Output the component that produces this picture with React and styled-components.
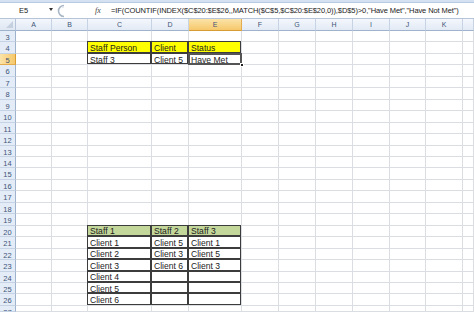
import React from 'react'
import styled, { createGlobalStyle, css } from 'styled-components'

const GlobalStyle = createGlobalStyle`
  html, body {
    margin: 0;
    padding: 0;
    background: #fff;
    overflow: hidden;
  }
  body {
    font-family: "Liberation Sans", Arial, sans-serif;
  }
`

const COLS = [
    { id: 'A', w: 36 }, { id: 'B', w: 36 }, { id: 'C', w: 64 }, { id: 'D', w: 37 },
    { id: 'E', w: 53 }, { id: 'F', w: 37 }, { id: 'G', w: 37 }, { id: 'H', w: 37 },
    { id: 'I', w: 37 }, { id: 'J', w: 36 }, { id: 'K', w: 37 }, { id: 'L', w: 11 },
]
const ROWS = Array.from({ length: 25 }, (_, i) => i + 3)
const ACTIVE = { col: 'E', row: 5 }
const YELLOW = '#ffff00'
const GREEN = '#c4d79b'

const CELLS = {
    C4: { v: 'Staff Person', fill: YELLOW, box: true },
    D4: { v: 'Client', fill: YELLOW, box: true },
    E4: { v: 'Status', fill: YELLOW, box: true },
    C5: { v: 'Staff 3', box: true },
    D5: { v: 'Client 5', box: true },
    E5: { v: 'Have Met', box: true },
    C20: { v: 'Staff 1', fill: GREEN, box: true },
    D20: { v: 'Staff 2', fill: GREEN, box: true },
    E20: { v: 'Staff 3', fill: GREEN, box: true },
}
const table2 = [
    ['Client 1', 'Client 5', 'Client 1'],
    ['Client 2', 'Client 3', 'Client 5'],
    ['Client 3', 'Client 6', 'Client 3'],
    ['Client 4', '', ''],
    ['Client 5', '', ''],
    ['Client 6', '', ''],
]
table2.forEach((r, i) => {
    ['C', 'D', 'E'].forEach((c, j) => {
        CELLS[c + (21 + i)] = { v: r[j], box: true }
    })
})

const FORMULA = '=IF(COUNTIF(INDEX($C$20:$E$26,,MATCH($C$5,$C$20:$E$20,0)),$D$5)>0,"Have Met","Have Not Met")'

const TopStrip = styled.div`
  height: 3px;
  background: #d3e1f1;
  border-bottom: 1px solid #b9cbe2;
  box-sizing: border-box;
`

const FormulaBar = styled.div`
  height: 16px;
  display: flex;
  align-items: center;
  background: #fff;
  border-bottom: 1px solid #b5c4d8;
  box-sizing: border-box;
  font-size: 7.5px;
  color: #222;
`

const NameBox = styled.div`
  width: 57px;
  height: 100%;
  display: flex;
  align-items: center;
  padding-left: 19px;
  box-sizing: border-box;
  position: relative;
`

const Caret = styled.span`
  position: absolute;
  right: 4px;
  top: 5px;
  width: 0;
  height: 0;
  border-left: 2px solid transparent;
  border-right: 2px solid transparent;
  border-top: 3px solid #333;
`

const Knob = styled.div`
  width: 38px;
  height: 100%;
  display: flex;
  align-items: center;
`

const FxLabel = styled.div`
  width: 13px;
  font-family: "Liberation Serif", serif;
  font-style: italic;
  font-size: 8px;
  color: #444;
`

const Formula = styled.div`
  flex: 1;
  height: 100%;
  display: flex;
  align-items: center;
  padding-left: 3px;
  white-space: nowrap;
  overflow: hidden;
  letter-spacing: -0.1px;
`

const Sheet = styled.div`
  display: grid;
  grid-template-columns: 16px ${COLS.map(c => c.w + 'px').join(' ')};
  grid-template-rows: 12px repeat(24, 11.46px) 6px;
  overflow: hidden;
`

const headerBg = css`
  background: ${p => p.$active
        ? 'linear-gradient(#fbe3a8, #f6c86c)'
        : 'linear-gradient(#f4f7fc, #e2eaf5)'};
`

const Corner = styled.div`
  background: linear-gradient(#eef3fa, #dfe7f2);
  border-right: 1px solid #b5c4d8;
  border-bottom: 1px solid #9fb3cc;
  box-sizing: border-box;
  position: relative;
  &::after {
    content: '';
    position: absolute;
    right: 2px;
    bottom: 2px;
    border-left: 7px solid transparent;
    border-bottom: 7px solid #c4d0de;
  }
`

const ColHead = styled.div`
  ${headerBg};
  border-right: 1px solid ${p => p.$active ? '#e3ad4f' : '#c6d3e4'};
  border-bottom: 1px solid ${p => p.$active ? '#d89c35' : '#9fb3cc'};
  box-sizing: border-box;
  display: flex;
  align-items: center;
  justify-content: center;
  font-size: 7px;
  color: #3e5577;
`

const RowHead = styled.div`
  background: ${p => p.$active ? 'linear-gradient(90deg, #fbe3a8, #f6c86c)' : '#e4ecf7'};
  border-right: 1px solid ${p => p.$active ? '#d89c35' : '#9fb3cc'};
  border-bottom: 1px solid ${p => p.$active ? '#e3ad4f' : '#c6d3e4'};
  box-sizing: border-box;
  display: flex;
  align-items: flex-start;
  justify-content: center;
  padding-top: 2px;
  overflow: hidden;
  font-size: 7.5px;
  color: #3e5577;
`

const Cell = styled.div`
  position: relative;
  background: ${p => p.$fill || '#fff'};
  border-right: 1px solid #dadde2;
  border-bottom: 1px solid #dadde2;
  box-sizing: border-box;
  display: flex;
  align-items: center;
  padding-left: 2px;
  padding-top: 1px;
  font-size: 8.6px;
  color: #1c1c1c;
  white-space: nowrap;
  ${p => p.$box && css`
    &::before {
      content: '';
      position: absolute;
      top: -1px;
      left: -1px;
      right: 0;
      bottom: 0;
      border: 1px solid #3c3c3c;
      z-index: 1;
      pointer-events: none;
    }
  `}
  ${p => p.$selected && css`
    &::after {
      content: '';
      position: absolute;
      top: -1px;
      left: -1px;
      right: -1px;
      bottom: -1px;
      border: 2px solid #555;
      z-index: 2;
    }
  `}
`

const FillHandle = styled.span`
  position: absolute;
  right: -3px;
  bottom: -3px;
  width: 4px;
  height: 4px;
  background: #222;
  border: 1px solid #fff;
  box-sizing: border-box;
  z-index: 3;
`

const App = () => {
    return (
        <>
            <GlobalStyle />
            <TopStrip />
            <FormulaBar>
                <NameBox>
                    E5
                    <Caret />
                </NameBox>
                <Knob>
                    <svg width="14" height="14" viewBox="0 0 14 14">
                        <path d="M7 1.5 A5.5 5.5 0 1 0 7 12.5" fill="none" stroke="#aab7c6" strokeWidth="1.6" />
                        <path d="M7 3 A4 4 0 0 0 5 4" fill="none" stroke="#dfe6ee" strokeWidth="1" />
                    </svg>
                </Knob>
                <FxLabel>fx</FxLabel>
                <Formula>{FORMULA}</Formula>
            </FormulaBar>
            <Sheet>
                <Corner />
                {COLS.map(c => (
                    <ColHead key={c.id} $active={c.id === ACTIVE.col}>
                        {c.id === 'L' ? '' : c.id}
                    </ColHead>
                ))}
                {ROWS.map(r => (
                    <React.Fragment key={r}>
                        <RowHead $active={r === ACTIVE.row}>{r}</RowHead>
                        {COLS.map(c => {
                            const key = c.id + r
                            const cell = CELLS[key]
                            const selected = c.id === ACTIVE.col && r === ACTIVE.row
                            return (
                                <Cell key={key} $fill={cell?.fill} $box={cell?.box} $selected={selected}>
                                    {cell?.v}
                                    {selected && <FillHandle />}
                                </Cell>
                            )
                        })}
                    </React.Fragment>
                ))}
            </Sheet>
        </>
    )
}

export default App
